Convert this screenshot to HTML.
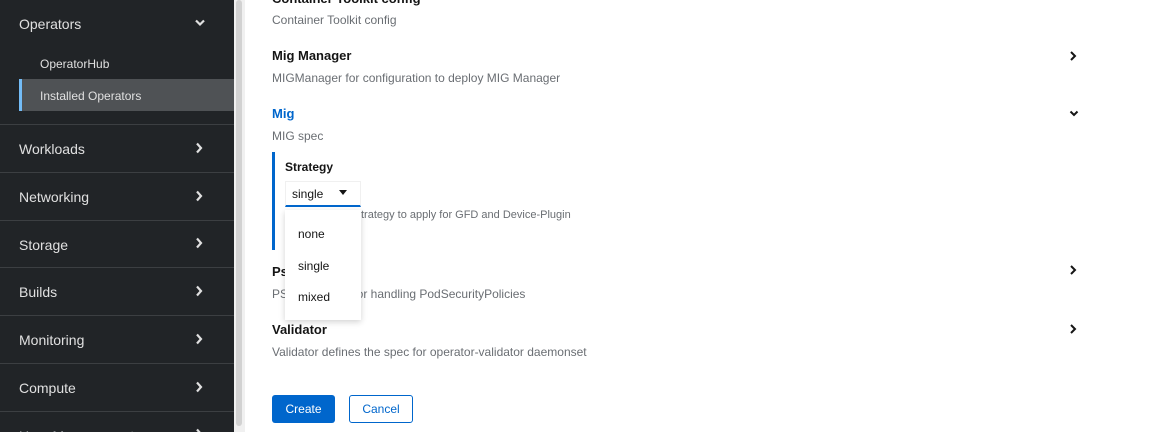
<!DOCTYPE html><html><head><style>
body{margin:0;width:1170px;height:432px;overflow:hidden;background:#fff;font-family:"Liberation Sans",sans-serif;position:relative}
.sb{position:absolute;left:0;top:0;width:234px;height:432px;background:#212427;overflow:hidden}
.scr{position:absolute;left:234px;top:0;width:11px;height:432px;background:#f0f0f0}
.scr div{position:absolute;left:2px;top:0;width:6px;height:426px;background:#d2d2d2;border-radius:3px}
.it{position:absolute;left:0;width:234px;color:#e0e0e0;font-size:14px}
.sep{position:absolute;left:0;width:234px;height:1px;background:#3c3f42}
.chev{position:absolute;left:195px}
.t{position:absolute;font-size:13px;color:#151515}
.b{font-weight:bold;font-size:13px}
.d{color:#6a6e73;font-size:12px}
.rc{position:absolute;left:1069px}
</style></head><body>
<div class="sb">
<div class="it" style="top:16px;left:19px">Operators</div>
<svg class="chev" style="top:19px" width="10" height="8" viewBox="0 0 10 8"><path d="M1 1.5L5 5.5L9 1.5" stroke="#e0e0e0" stroke-width="2.2" fill="none"/></svg>
<div class="it" style="top:57px;left:40px;font-size:12px">OperatorHub</div>
<div style="position:absolute;left:19px;top:79px;width:215px;height:32px;background:#4f5255"></div>
<div style="position:absolute;left:19px;top:79px;width:3px;height:32px;background:#73bcf7"></div>
<div class="it" style="top:89px;left:40px;font-size:12px">Installed Operators</div>
<div class="sep" style="top:124px"></div>
<div class="it" style="top:141px;left:19px">Workloads</div>
<div class="sep" style="top:172px"></div>
<div class="it" style="top:189px;left:19px">Networking</div>
<div class="sep" style="top:220px"></div>
<div class="it" style="top:237px;left:19px">Storage</div>
<div class="sep" style="top:267px"></div>
<div class="it" style="top:284px;left:19px">Builds</div>
<div class="sep" style="top:315px"></div>
<div class="it" style="top:332px;left:19px">Monitoring</div>
<div class="sep" style="top:363px"></div>
<div class="it" style="top:380px;left:19px">Compute</div>
<div class="sep" style="top:411px"></div>
<div class="it" style="top:428px;left:19px">User Management</div>
<svg class="chev" style="top:142px" width="8" height="12" viewBox="0 0 8 12"><path d="M2 1.5L6 6L2 10.5" stroke="#e0e0e0" stroke-width="2.2" fill="none"/></svg>
<svg class="chev" style="top:190px" width="8" height="12" viewBox="0 0 8 12"><path d="M2 1.5L6 6L2 10.5" stroke="#e0e0e0" stroke-width="2.2" fill="none"/></svg>
<svg class="chev" style="top:237px" width="8" height="12" viewBox="0 0 8 12"><path d="M2 1.5L6 6L2 10.5" stroke="#e0e0e0" stroke-width="2.2" fill="none"/></svg>
<svg class="chev" style="top:285px" width="8" height="12" viewBox="0 0 8 12"><path d="M2 1.5L6 6L2 10.5" stroke="#e0e0e0" stroke-width="2.2" fill="none"/></svg>
<svg class="chev" style="top:333px" width="8" height="12" viewBox="0 0 8 12"><path d="M2 1.5L6 6L2 10.5" stroke="#e0e0e0" stroke-width="2.2" fill="none"/></svg>
<svg class="chev" style="top:381px" width="8" height="12" viewBox="0 0 8 12"><path d="M2 1.5L6 6L2 10.5" stroke="#e0e0e0" stroke-width="2.2" fill="none"/></svg>
<svg class="chev" style="top:428px" width="8" height="12" viewBox="0 0 8 12"><path d="M2 1.5L6 6L2 10.5" stroke="#e0e0e0" stroke-width="2.2" fill="none"/></svg>
</div>
<div class="scr"><div></div></div>

<div class="t b" style="left:272px;top:-9px">Container Toolkit config</div>
<div class="t d" style="left:272px;top:13px">Container Toolkit config</div>
<div class="t b" style="left:272px;top:48px">Mig Manager</div>
<div class="t d" style="left:272px;top:71px">MIGManager for configuration to deploy MIG Manager</div>
<div class="t b" style="left:272px;top:106px;color:#06c">Mig</div>
<div class="t d" style="left:272px;top:129px">MIG spec</div>
<div style="position:absolute;left:272px;top:152px;width:3px;height:98px;background:#06c"></div>
<div class="t b" style="left:285px;top:160px;font-size:12px">Strategy</div>
<div style="position:absolute;left:285px;top:181px;width:76px;height:26px;border:1px solid #f0f0f0;border-bottom:2px solid #06c;box-sizing:border-box"></div>
<div class="t" style="left:292px;top:187px;font-size:12px">single</div>
<svg style="position:absolute;left:339px;top:190px" width="8" height="5"><path d="M0 0H8L4 5Z" fill="#151515"/></svg>
<div class="t d" style="left:361px;top:209px;font-size:11px">trategy to apply for GFD and Device-Plugin</div>
<div class="t b" style="left:272px;top:264px">Ps</div>
<div class="t d" style="left:272px;top:287px">PS</div>
<div class="t d" style="left:344px;top:287px">c for handling PodSecurityPolicies</div>
<div style="position:absolute;left:285px;top:210px;width:76px;height:110px;background:#fff;box-shadow:0 2px 6px rgba(0,0,0,.18)"></div>
<div class="t" style="left:298px;top:227px;font-size:12px">none</div>
<div class="t" style="left:298px;top:259px;font-size:12px">single</div>
<div class="t" style="left:298px;top:290px;font-size:12px">mixed</div>
<div class="t b" style="left:272px;top:322px">Validator</div>
<div class="t d" style="left:272px;top:345px">Validator defines the spec for operator-validator daemonset</div>
<svg class="rc" style="top:50px" width="8" height="12"><path d="M2 2L6 6L2 10" stroke="#151515" stroke-width="2" fill="none"/></svg>
<svg class="rc" style="top:110px" width="10" height="8"><path d="M1.5 1.5L5 5L8.5 1.5" stroke="#151515" stroke-width="2" fill="none"/></svg>
<svg class="rc" style="top:264px" width="8" height="12"><path d="M2 2L6 6L2 10" stroke="#151515" stroke-width="2" fill="none"/></svg>
<svg class="rc" style="top:323px" width="8" height="12"><path d="M2 2L6 6L2 10" stroke="#151515" stroke-width="2" fill="none"/></svg>
<div style="position:absolute;left:272px;top:395px;width:63px;height:28px;background:#06c;border-radius:3px;color:#fff;font-size:12px;text-align:center;line-height:28px">Create</div>
<div style="position:absolute;left:349px;top:395px;width:64px;height:28px;border:1px solid #06c;box-sizing:border-box;border-radius:3px;color:#06c;font-size:12px;text-align:center;line-height:26px">Cancel</div>
</body></html>
